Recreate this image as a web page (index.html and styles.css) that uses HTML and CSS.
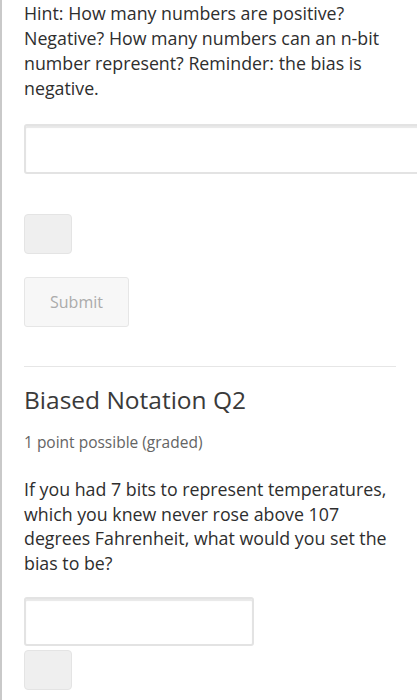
FILE: index.html
```html
<!DOCTYPE html>
<html>
<head>
<meta charset="utf-8">
<link rel="stylesheet" href="styles.css">
</head>
<body>
<div class="page">
  <p class="hint">Hint: How many numbers are positive? Negative? How many numbers can an n-bit number represent? Reminder: the bias is negative.</p>
  <div class="field-wide"><input class="text-input wide" type="text"></div>
  <div class="status-box"></div>
  <button class="submit" type="button">Submit</button>
  <hr class="divider">
  <h3 class="title">Biased Notation Q2</h3>
  <div class="points">1 point possible (graded)</div>
  <p class="question">If you had 7 bits to represent temperatures, which you knew never rose above 107 degrees Fahrenheit, what would you set the bias to be?</p>
  <input class="text-input narrow" type="text">
  <div class="status-box second"></div>
</div>
</body>
</html>
```
FILE: styles.css
```css
html, body {
  margin: 0;
  padding: 0;
  background: #fff;
  overflow: hidden;
}
body {
  font-family: "Open Sans", "DejaVu Sans", sans-serif;
  color: #2e2e2e;
}
.page {
  border-left: 2px solid #c9c9c9;
  padding: 1px 21px 40px 22px;
  min-height: 700px;
  box-sizing: border-box;
  overflow: hidden;
}
.hint {
  margin: 0;
  font-size: 17.8px;
  line-height: 25px;
}
.field-wide {
  margin-top: 23px;
  margin-right: -21px;
  overflow: hidden;
}
.text-input {
  display: block;
  box-sizing: border-box;
  height: 50px;
  border: 2px solid #e3e3e3;
  border-radius: 3px;
  box-shadow: inset 0 2px 1px #e8e8e8;
  background: #fff;
  margin: 0;
  padding: 0;
}
.wide { width: 420px; }
.narrow { width: 230px; height: 49px; margin-top: 22px; }
.status-box {
  box-sizing: border-box;
  width: 48px;
  height: 40px;
  margin-top: 40px;
  background: #efefef;
  border: 1px solid #e4e4e4;
  border-radius: 4px;
}
.status-box.second { margin-top: 4px; }
.submit {
  display: block;
  box-sizing: border-box;
  margin-top: 23px;
  width: 105px;
  height: 50px;
  background: #f7f7f7;
  border: 1px solid #e6e6e6;
  border-radius: 3px;
  font-family: "Open Sans", sans-serif;
  font-size: 16px;
  color: #ababab;
  padding: 0;
}
.divider {
  margin: 39px 0 0 0;
  border: 0;
  border-top: 1px solid #e6e6e6;
  height: 0;
}
.title {
  margin: 17px 0 0 0;
  font-size: 24.5px;
  font-weight: 400;
  line-height: 32px;
  color: #3a3a3a;
}
.points {
  margin-top: 16px;
  font-size: 15.5px;
  line-height: 20px;
  color: #646464;
}
.question {
  margin: 25px 0 0 0;
  font-size: 17.8px;
  line-height: 24.5px;
}
```
